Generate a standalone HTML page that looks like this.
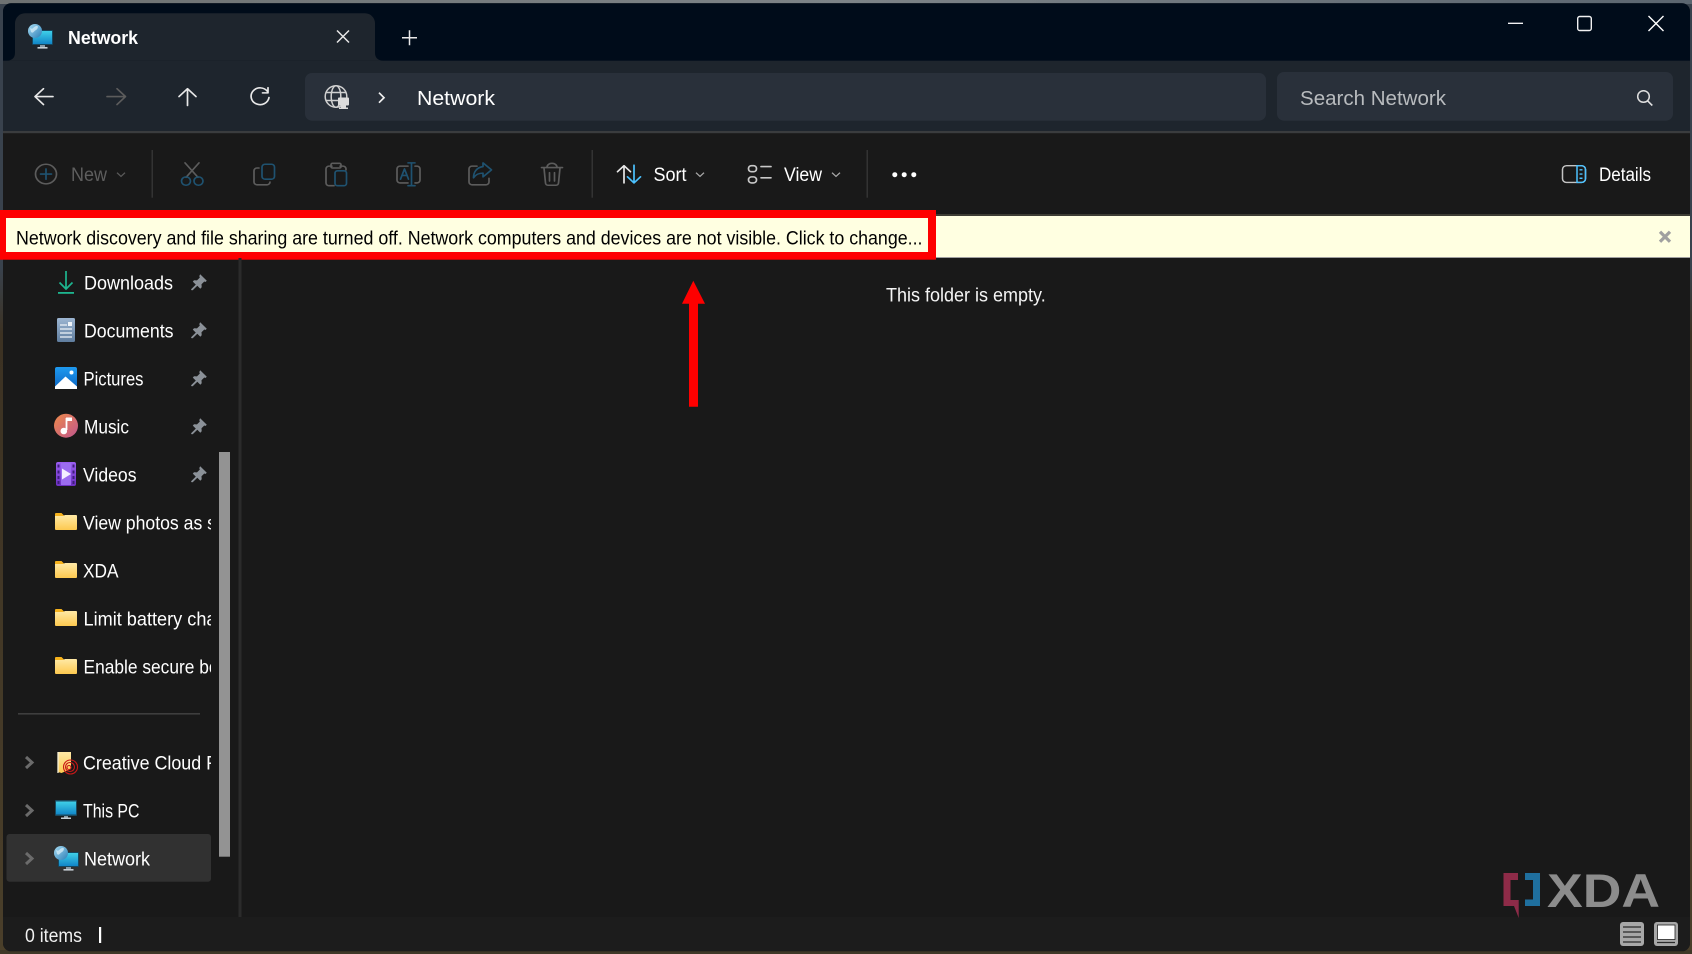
<!DOCTYPE html>
<html><head><meta charset="utf-8"><title>Network</title>
<style>
html,body{margin:0;padding:0;width:1692px;height:954px;overflow:hidden;background:#2a2d30}
svg{display:block}
text{font-family:"Liberation Sans",sans-serif;font-size:19.5px;fill:#fff}
.g{fill:none;stroke:#5c5c5c;stroke-width:1.7;stroke-linecap:round;stroke-linejoin:round}
.b{fill:none;stroke:#1f5270;stroke-width:1.7;stroke-linecap:round;stroke-linejoin:round}
.w{fill:none;stroke:#e8e8e8;stroke-width:1.7;stroke-linecap:round;stroke-linejoin:round}
.p{fill:#8b9198}
.c{fill:none;stroke:#6b6b6b;stroke-width:3;stroke-linejoin:miter}
.ch{fill:none;stroke:#a8a8a8;stroke-width:1.3}
</style></head><body>
<svg width="1692" height="954" viewBox="0 0 1692 954" xmlns="http://www.w3.org/2000/svg">
<defs>
<linearGradient id="wl" x1="0" y1="0" x2="0" y2="1"><stop offset="0" stop-color="#39424d"/><stop offset=".28" stop-color="#39424d"/><stop offset=".35" stop-color="#3c3223"/><stop offset="1" stop-color="#4a3f2a"/></linearGradient>
<linearGradient id="wt" x1="0" y1="0" x2="1" y2="0"><stop offset="0" stop-color="#6e7272"/><stop offset=".5" stop-color="#7d8488"/><stop offset="1" stop-color="#5b6670"/></linearGradient>
<linearGradient id="fo" x1="0" y1="0" x2="0" y2="1"><stop offset="0" stop-color="#ffe9a6"/><stop offset="1" stop-color="#fdc94f"/></linearGradient>
<linearGradient id="sc" x1="0" y1="0" x2="0" y2="1"><stop offset="0" stop-color="#3fd0e8"/><stop offset="1" stop-color="#1186c8"/></linearGradient>
<linearGradient id="gl" x1="0" y1="0" x2="1" y2="1"><stop offset="0" stop-color="#a8dcf2"/><stop offset="1" stop-color="#2c7fb8"/></linearGradient>
<linearGradient id="doc" x1="0" y1="0" x2="0" y2="1"><stop offset="0" stop-color="#9db6d2"/><stop offset="1" stop-color="#5f7d9e"/></linearGradient>
<linearGradient id="pic" x1="0" y1="0" x2="0" y2="1"><stop offset="0" stop-color="#1e9af0"/><stop offset="1" stop-color="#0c63c0"/></linearGradient>
<linearGradient id="mus" x1="0" y1="0" x2="1" y2="1"><stop offset="0" stop-color="#ee8a4a"/><stop offset="1" stop-color="#c0568e"/></linearGradient>
<linearGradient id="vid" x1="0" y1="0" x2="0" y2="1"><stop offset="0" stop-color="#9a5ef0"/><stop offset="1" stop-color="#6c30c0"/></linearGradient>
<clipPath id="sb"><rect x="0" y="258" width="211" height="650"/></clipPath>
<symbol id="folder" overflow="visible" viewBox="0 0 22 17" width="22" height="17">
<path d="M0 1a1 1 0 0 1 1-1h5.500l2.500 2.500H22V5H0z" fill="#f6b21c"/>
<path d="M0 3h8l2-1h11a1 1 0 0 1 1 1v13a1 1 0 0 1-1 1H1a1 1 0 0 1-1-1z" fill="url(#fo)"/>
</symbol>
<symbol id="pin" overflow="visible" viewBox="0 0 16 16" width="16" height="16">
<path class="p" d="M9.200 0.200l6.600 6.600-1.400 1.200-1.100-.5-2.800 2.800.2 3-1.400 1.400-3-3-4.600 4.600-1.400-.2-.2-.9 4.700-4.600-3-3L3 6.200l3 .2 2.800-2.800-.5-1.600z"/>
</symbol>
<symbol id="net" overflow="visible" viewBox="0 0 25 25" width="25" height="25">
<rect x="4" y="6" width="21" height="15" rx="1" fill="#16475f"/>
<rect x="5" y="7" width="19" height="13" fill="url(#sc)"/>
<rect x="12" y="21" width="5" height="2" fill="#8a9aa5"/>
<rect x="9.500" y="23" width="10" height="1.600" fill="#c5ced4"/>
<circle cx="7" cy="7" r="7" fill="url(#gl)"/>
<path d="M2 4c3 2 3-1 6-2s2 3 0 4-3 4-5 2z" fill="#dff2fb" opacity=".7"/>
</symbol>
</defs>

<!-- wallpaper edges -->
<rect width="1692" height="954" fill="url(#wl)"/>
<rect width="1692" height="4" fill="url(#wt)"/>
<rect y="950" width="1692" height="4" fill="#3f3827"/>

<!-- window -->
<rect x="3" y="3.300" width="1687" height="948" rx="8" fill="#191919"/>
<path d="M3 61V11.300a8 8 0 0 1 8-8H1682a8 8 0 0 1 8 8V61z" fill="#000c1a"/>
<rect x="3" y="60.700" width="1687" height="70.300" fill="#1e252d"/>
<rect x="3" y="131" width="1687" height="2.200" fill="#3a3c3e"/>

<!-- tab -->
<path d="M6 60.700c6 0 9-3 9-8V23.300a10 10 0 0 1 10-10H365a10 10 0 0 1 10 10V52.700c0 5 3 8 9 8z" fill="#1e252d"/>
<use href="#net" x="28" y="24"/>
<text x="68" y="44" style="font-weight:700;font-size:18px" textLength="70" lengthAdjust="spacingAndGlyphs">Network</text>
<path d="M337 30.500l12 12M349 30.500l-12 12" fill="none" stroke="#e8e8e8" stroke-width="1.500"/>
<path d="M402 37.700h15M409.500 30.200v15" fill="none" stroke="#e8e8e8" stroke-width="1.500"/>

<!-- window controls -->
<path d="M1508 23.300h15" stroke="#fff" stroke-width="1.300" fill="none"/>
<rect x="1577.700" y="16.500" width="13.600" height="14" rx="2" fill="none" stroke="#f2f2f2" stroke-width="1.400"/>
<path d="M1648.500 16l15 15M1663.500 16l-15 15" stroke="#fff" stroke-width="1.400" fill="none"/>

<!-- nav -->
<g transform="scale(1,.9333)">
<path d="M53 103.500H36M43.500 95l-8.500 8.500 8.500 8.500" class="w"/>
<path d="M107 103.500H124.500M117 95l8.500 8.500-8.500 8.500" class="g"/>
<path d="M187.500 113V95.500M179 103.500l8.500-8.500 8.500 8.500" class="w"/>
<path d="M267.500 98a9 9 0 1 0 1.500 6.500M268 94v5.500h-5.500" class="w"/>
</g>

<rect x="305" y="73" width="961" height="47.700" rx="7" fill="#29303a"/>
<rect x="1277" y="72" width="396" height="48.700" rx="7" fill="#29303a"/>
<!-- globe -->
<g fill="none" stroke="#d0d0d0" stroke-width="1.500">
<circle cx="336" cy="96.500" r="10.800"/>
<ellipse cx="336" cy="96.500" rx="4.800" ry="10.800"/>
<path d="M326 92.500h20M326 100.500h20"/>
</g>
<rect x="338" y="97.500" width="11" height="8" rx="1" fill="#dcdcdc"/>
<rect x="341" y="105.500" width="5" height="2.500" fill="#dcdcdc"/>
<rect x="339" y="107.500" width="9" height="1.500" fill="#dcdcdc"/>
<path d="M379 92.700l5 5-5 5" fill="none" stroke="#f0f0f0" stroke-width="1.700"/>
<text x="417" y="105" style="font-size:20.500px" textLength="78" lengthAdjust="spacingAndGlyphs">Network</text>
<text x="1300" y="105" style="font-size:20.500px;fill:#b8bbbe" textLength="146" lengthAdjust="spacingAndGlyphs">Search Network</text>
<circle cx="1643.500" cy="96.500" r="5.800" fill="none" stroke="#e0e0e0" stroke-width="1.500"/>
<path d="M1647.500 100.700l4.800 4.800" stroke="#e0e0e0" stroke-width="1.600" fill="none"/>

<!-- command bar -->
<rect x="151.500" y="150" width="1.500" height="47.700" fill="#333"/>
<rect x="591.500" y="150" width="1.500" height="47.700" fill="#333"/>
<rect x="866.500" y="150" width="1.500" height="47.700" fill="#333"/>

<text x="71" y="181" style="fill:#5e5e5e;font-size:19px" textLength="36" lengthAdjust="spacingAndGlyphs">New</text>
<text x="653.500" y="181" style="font-size:19px" textLength="33" lengthAdjust="spacingAndGlyphs">Sort</text>
<text x="784" y="181" style="font-size:19px" textLength="38" lengthAdjust="spacingAndGlyphs">View</text>
<text x="1599" y="181" style="font-size:19px" textLength="52" lengthAdjust="spacingAndGlyphs">Details</text>

<g transform="scale(1,.9333)">
<circle cx="46" cy="186.500" r="10.500" class="g"/>
<path d="M46 181v11M40.500 186.500h11" class="b"/>
<path d="M117 185l4 4 4-4" fill="none" stroke="#5a5a5a" stroke-width="1.300"/>
<!-- cut -->
<path d="M185 174.500l13 15.500M199 174.500l-13 15.500" class="g"/>
<circle cx="186" cy="194" r="4.500" class="b"/><circle cx="198.500" cy="194" r="4.500" class="b"/>
<!-- copy -->
<path d="M259 180h-2a3 3 0 0 0-3 3v12a3 3 0 0 0 3 3h10a3 3 0 0 0 3-3" class="g"/>
<rect x="262" y="176" width="12.500" height="16" rx="3" class="b"/>
<!-- paste -->
<path d="M332 178h-3a3 3 0 0 0-3 3v15a3 3 0 0 0 3 3h5M340 178h3a3 3 0 0 1 3 3v1" class="g"/>
<rect x="331" y="175" width="10" height="5" rx="1.500" class="g"/>
<rect x="335" y="183" width="11.500" height="16" rx="2.500" class="b"/>
<!-- rename -->
<path d="M408 178h-8a3 3 0 0 0-3 3v12a3 3 0 0 0 3 3h8M415 178h2a3 3 0 0 1 3 3v12a3 3 0 0 1-3 3h-2" class="g"/>
<path d="M411.500 175v24M408 174.500h7M408 199h7M400.500 192l4-11 4 11M402 188h5" class="b"/>
<!-- share -->
<path d="M477 178h-5a3 3 0 0 0-3 3v14a3 3 0 0 0 3 3h14a3 3 0 0 0 3-3v-4" class="g"/>
<path d="M483 174.500l8.500 7.500-8.500 7.500v-4c-4 0-7 1-9.500 5 0-6 3-11 9.500-12z" class="b"/>
<!-- delete -->
<path d="M541.500 179.500h21M547 179.500c0-6 10-6 10 0M544 180l1.500 16a2.500 2.500 0 0 0 2.500 2.500h8a2.500 2.500 0 0 0 2.500-2.500l1.500-16M549.500 185v9M554.500 185v9" class="g"/>
<!-- sort -->
<path d="M624 196V178M617.500 184l6.500-6.500 6.500 6.500" class="w"/>
<path d="M634 177v19M627.500 189.500l6.500 6.500 6.500-6.500" fill="none" stroke="#4cc2ff" stroke-width="1.700" stroke-linecap="round" stroke-linejoin="round"/>
<path d="M696 185l4 4 4-4" class="ch"/>
<!-- view -->
<rect x="748.500" y="177.500" width="8" height="6.500" rx="3" class="w" style="stroke:#c8c8c8"/>
<rect x="748.500" y="189.500" width="8" height="6.500" rx="3" class="w" style="stroke:#c8c8c8"/>
<path d="M761 178.500h10M761 190.500h10" class="w" style="stroke:#c8c8c8"/>
<path d="M832 185l4 4 4-4" class="ch"/>
<!-- details -->
<rect x="1562.500" y="177.500" width="23" height="18" rx="4" fill="none" stroke="#c4c4c4" stroke-width="1.500"/>
<path d="M1577 177.500h4.500a4 4 0 0 1 4 4v10a4 4 0 0 1-4 4H1577z" fill="none" stroke="#4cc2ff" stroke-width="1.500"/>
<path d="M1579.500 182h3M1579.500 186.500h3M1579.500 191h3" stroke="#4cc2ff" stroke-width="1.500"/>
</g>
<circle cx="894.800" cy="174.700" r="2.500" fill="#fff"/><circle cx="904.200" cy="174.700" r="2.500" fill="#fff"/><circle cx="913.800" cy="174.700" r="2.500" fill="#fff"/>

<!-- yellow bar -->
<rect x="3" y="214" width="1687" height="2" fill="#3d3c34"/>
<rect x="3" y="216" width="1687" height="41" fill="#ffffe1"/>
<rect x="3" y="257" width="1687" height="1" fill="#a0a0a0"/>
<path d="M1660 231.700l10 10M1670 231.700l-10 10" stroke="#a0a0a0" stroke-width="3.200" fill="none"/>

<!-- red highlight -->
<rect x="0" y="210" width="936" height="49.700" fill="#fe0000"/>
<rect x="6" y="218" width="922" height="34" fill="#ffffe1"/>
<text x="16" y="244.300" style="font-size:19.500px;fill:#000" textLength="906.500" lengthAdjust="spacingAndGlyphs">Network discovery and file sharing are turned off. Network computers and devices are not visible. Click to change...</text>

<!-- arrow -->
<path d="M693.300 280.700L705 303.700H698V406.700H689V303.700H682z" fill="#fe0000"/>
<text x="886" y="301.300" style="fill:#f4f4f4" textLength="159.700" lengthAdjust="spacingAndGlyphs">This folder is empty.</text>

<!-- sidebar -->
<rect x="238.500" y="258" width="3" height="659" fill="#2b2b2b"/>
<rect x="219" y="452" width="11" height="404.700" fill="#939393"/>
<rect x="6.500" y="834" width="204.500" height="47.700" rx="3" fill="#313131"/>
<rect x="18" y="713" width="182" height="1.600" fill="#3e3e3e"/>

<!-- downloads icon -->
<path d="M66 271v18M59.500 282.500l6.500 6.500 6.500-6.500" fill="none" stroke="#1db58f" stroke-width="1.700"/>
<rect x="58" y="292" width="16" height="1.800" fill="#1db58f"/>
<!-- documents -->
<rect x="57" y="318" width="18" height="24" rx="1.500" fill="url(#doc)"/>
<path d="M60 325h7M60 329h12M60 333h12M60 337h12" stroke="#eef3f8" stroke-width="1.200"/><rect x="68" y="322" width="4" height="4" fill="#eef3f8"/>
<!-- pictures -->
<rect x="55" y="367" width="22" height="22" rx="2" fill="url(#pic)"/>
<path d="M55 386.500l10.500-10 11.500 10v2.500H55z" fill="#fff"/><circle cx="71.500" cy="372.500" r="2" fill="#fff"/>
<!-- music -->
<circle cx="66" cy="425.700" r="12" fill="url(#mus)"/>
<path d="M66.500 418v12" stroke="#fff" stroke-width="1.800"/><path d="M66 417.500h6v3.500h-5z" fill="#fff"/><circle cx="63.800" cy="431" r="3.300" fill="#fff"/>
<!-- videos -->
<rect x="56" y="462" width="20" height="24" rx="2" fill="url(#vid)"/>
<rect x="61" y="463" width="10" height="22" fill="#9c6cf0"/>
<path d="M62 468.500l9 5.500-9 5.500z" fill="#f4eeff"/>
<g fill="#3f1d7c"><rect x="57.500" y="464.500" width="2" height="3"/><rect x="57.500" y="470.500" width="2" height="3"/><rect x="57.500" y="476" width="2" height="3"/><rect x="57.500" y="481" width="2" height="3"/><rect x="72.500" y="464.500" width="2" height="3"/><rect x="72.500" y="470.500" width="2" height="3"/><rect x="72.500" y="476" width="2" height="3"/><rect x="72.500" y="481" width="2" height="3"/></g>

<use href="#folder" x="55" y="513"/>
<use href="#folder" x="55" y="561"/>
<use href="#folder" x="55" y="609"/>
<use href="#folder" x="55" y="657"/>

<!-- creative cloud -->
<path d="M58 752h13v17l-9.500 4-3.500-1z" fill="url(#fo)"/>
<path d="M58 752v21" stroke="#f6f0d8" stroke-width="1.300"/>
<g fill="none" stroke="#c81818" stroke-width="1.100"><circle cx="70.500" cy="767" r="7"/><circle cx="70" cy="767" r="4.500"/><circle cx="69" cy="767.500" r="2"/></g>
<!-- this pc -->
<rect x="55" y="800" width="22" height="16" rx="1" fill="#1a4a60"/>
<rect x="56" y="801.500" width="20" height="13" fill="url(#sc)"/>
<rect x="64" y="816" width="4" height="1.500" fill="#8a9aa5"/><rect x="61" y="817.500" width="10" height="1.500" fill="#c5ced4"/>
<!-- network -->
<use href="#net" x="54" y="846"/>

<g clip-path="url(#sb)">
<text x="84" y="289.300" textLength="89" lengthAdjust="spacingAndGlyphs">Downloads</text>
<text x="84" y="337.300" textLength="89.500" lengthAdjust="spacingAndGlyphs">Documents</text>
<text x="83.500" y="385.300" textLength="60" lengthAdjust="spacingAndGlyphs">Pictures</text>
<text x="84" y="433.300" textLength="45" lengthAdjust="spacingAndGlyphs">Music</text>
<text x="83" y="481.300" textLength="53.500" lengthAdjust="spacingAndGlyphs">Videos</text>
<text x="83" y="529.300" textLength="133" lengthAdjust="spacingAndGlyphs">View photos as s</text>
<text x="83" y="577.300" textLength="35.500" lengthAdjust="spacingAndGlyphs">XDA</text>
<text x="83.500" y="625.300" textLength="133" lengthAdjust="spacingAndGlyphs">Limit battery cha</text>
<text x="83.500" y="673.300" textLength="135" lengthAdjust="spacingAndGlyphs">Enable secure bo</text>
<text x="83" y="769.300" textLength="134" lengthAdjust="spacingAndGlyphs">Creative Cloud F</text>
<text x="83" y="817.300" textLength="56.500" lengthAdjust="spacingAndGlyphs">This PC</text>
<text x="84" y="865.300" textLength="66" lengthAdjust="spacingAndGlyphs">Network</text>
</g>

<use href="#pin" x="191" y="274"/>
<use href="#pin" x="191" y="322"/>
<use href="#pin" x="191" y="370"/>
<use href="#pin" x="191" y="418"/>
<use href="#pin" x="191" y="466"/>

<path d="M26 757l6 5.500-6 5.500" class="c"/>
<path d="M26 805l6 5.500-6 5.500" class="c"/>
<path d="M26 853l6 5.500-6 5.500" class="c"/>

<!-- status bar -->
<path d="M3 917H1690V943a8 8 0 0 1-8 8H11a8 8 0 0 1-8-8z" fill="#1c1c1c"/>
<text x="25" y="942" style="fill:#f0f0f0" textLength="57" lengthAdjust="spacingAndGlyphs">0 items</text>
<rect x="99" y="927" width="2.200" height="16" fill="#fff"/>

<!-- XDA logo -->
<path d="M1503.500 873H1518V880H1510.500V900H1518.700V918L1514 906H1503.500z" fill="#8e2b48"/>
<path d="M1525 873H1540V906H1525V899.500H1533V880H1525z" fill="#1f6f9e"/>
<text x="1547" y="907" style="font-size:47px;font-weight:700;fill:#8c8c8c" textLength="113" lengthAdjust="spacingAndGlyphs">XDA</text>

<!-- view toggles -->
<rect x="1620" y="922" width="24" height="24" rx="3" fill="#a8a8a8"/>
<path d="M1623 927h18M1623 932h18M1623 937h18M1623 942h18" stroke="#2a2a2a" stroke-width="1.200"/>
<rect x="1654" y="922" width="24" height="24" rx="3" fill="#a8a8a8"/>
<rect x="1657.500" y="925" width="17.500" height="14.500" fill="#fff" stroke="#222" stroke-width=".8"/>
<path d="M1657 942.500h18" stroke="#2a2a2a" stroke-width="1.200"/>
</svg>
</body></html>
